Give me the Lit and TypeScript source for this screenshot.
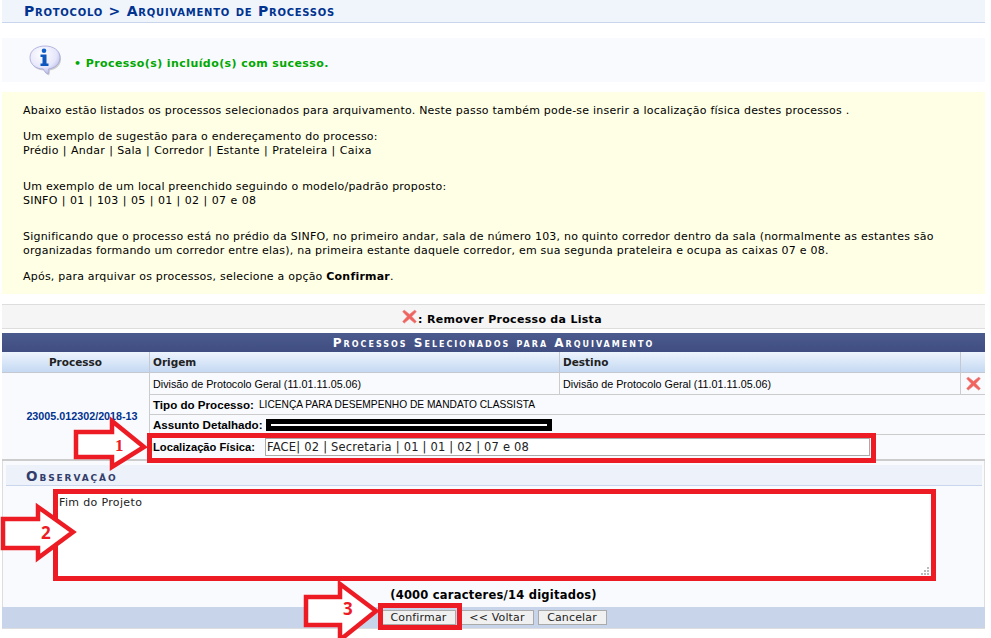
import { LitElement, html, css, svg } from "lit";
import { customElement } from "lit/decorators.js";

const arrow = (d: string) => svg`<path d=${d} fill="#fff" stroke="#ed1c24" stroke-width="4.5" stroke-linejoin="miter" stroke-miterlimit="6"/>`;

const cross = (s: number) => html`<svg class="x" width=${s} height=${s} viewBox="0 0 14 14"><path d="M2 1 L7 5 L12 1 L13.4 2.6 L9.2 7 L13.4 11.6 L12 13.2 L7 9.2 L2 13.2 L.6 11.6 L4.8 7 L.6 2.6 Z" fill="#f0635f" stroke="#e8908c" stroke-width=".6"/></svg>`;

@customElement("app-root")
export class AppRoot extends LitElement {
  static styles = css`
    :host { display: block; position: relative; width: 991px; height: 638px; overflow: hidden; background: #fff; font-family: "DejaVu Sans", Verdana, sans-serif; font-size: 11px; color: #000; }
    .page { display: flex; flex-direction: column; padding: 0 6px 0 2px; }
    .title { height: 22px; border-bottom: 1px solid #c8d5ec; background: #f0f4fb; display: flex; align-items: center; padding-left: 22px; font-variant: small-caps; font-weight: bold; font-size: 14px; color: #003390; letter-spacing: .76px; white-space: nowrap; }
    .msg { margin-top: 15px; height: 44px; background: #f9fafd; display: flex; align-items: flex-start; padding-left: 26px; gap: 12px; }
    .msg svg { margin-top: 5px; }
    .msg p { margin: 19px 0 0; font-weight: bold; color: #00a800; font-size: 11px; line-height: 14px; letter-spacing: .42px; }
    .help { margin-top: 10px; background: #ffffe6; padding: 12px 21px 10px; line-height: 14px; font-size: 11px; letter-spacing: .22px; }
    .help p { margin: 0 0 12px; }
    .help p.lg { margin-bottom: 22px; }
    .help p:last-child { margin: 0; }
    .seq { word-spacing: .55px; }
    .legend { margin-top: 10px; height: 18px; background: #f5f5f5; border-top: 1px solid #ddd; border-bottom: 1px solid #ddd; display: flex; align-items: center; justify-content: center; font-weight: bold; font-size: 11px; letter-spacing: .3px; padding: 5px 0 0 17px; }
    .legend .x { margin-right: 1px; margin-top: -6px; }
    .caption { margin-top: 4px; height: 19px; background: linear-gradient(#4c5b8d, #3f4d80); color: #fff; display: flex; align-items: center; justify-content: center; font-variant: small-caps; font-weight: bold; font-size: 12px; letter-spacing: 2px; white-space: nowrap; }
    .grid { display: grid; grid-template-columns: 148px 410px 401px 24px; background: #f9fafd; border-bottom: 2px solid #ccc; font-family: "Liberation Sans", Arial, sans-serif; font-size: 10.75px; }
    .th { height: 20px; border-bottom: 1px solid #c4c8d0; border-right: 1px solid #c4c8d0; background: linear-gradient(#edf4fd, #c5d9f3); display: flex; align-items: center; padding-left: 3px; font-family: "DejaVu Sans", sans-serif; font-size: 10.5px; font-weight: bold; color: #222; }
    .th.c { justify-content: center; padding-left: 0; }
    .th.last { border-right: none; }
    .proc { grid-row: span 4; border-right: 1px solid #ccc; display: flex; align-items: center; justify-content: center; color: #003390; font-weight: bold; padding: 0 0 0 13px; }
    .td { display: flex; align-items: center; padding-left: 3px; border-bottom: 1px solid #ccc; white-space: nowrap; }
    .r1 { height: 21px; border-right: 1px solid #ccc; }
    .r1.last { border-right: none; justify-content: center; padding: 0; }
    .wide { grid-column: 2 / 5; height: 19px; }
    .wide b { font-size: 11.6px; margin-right: 5px; }
    .upper { font-size: 10.2px; }
    .black { display: inline-block; box-sizing: border-box; border: 5px solid #000; background: #fff; height: 12px; width: 286px; margin-left: -2px; }
    .loc { grid-column: 2 / 5; height: 24px; border-bottom: none; }
    .loc b { font-size: 11.2px; width: 112px; flex: none; }
    .input { width: 605px; height: 18px; box-sizing: border-box; border: 1px solid #aaa; background: #fff; display: flex; align-items: center; padding-left: 1px; font-family: "DejaVu Sans", sans-serif; font-size: 11.5px; letter-spacing: .2px; color: #222; }
    .panel { border-left: 1px solid #ddd; border-right: 1px solid #ddd; background: #f9fafd; display: flex; flex-direction: column; align-items: center; }
    .obs { margin-top: 4px; align-self: stretch; margin-left: 3px; margin-right: 2px; box-sizing: border-box; height: 21px; background: #edf1f9; border-bottom: 1px solid #c8d5ec; display: flex; align-items: center; padding: 1px 0 0 20px; font-variant: small-caps; font-weight: bold; font-size: 13.5px; letter-spacing: 1.9px; color: #333d6b; }
    .ta { align-self: flex-start; margin: 3px 0 0 50px; width: 883px; height: 92px; box-sizing: border-box; border: 5px solid #ed1c24; background: #fff; padding: 2px 1px; font-size: 11px; line-height: 14px; letter-spacing: .35px; position: relative; color: #222; }
    .grip { position: absolute; right: 2px; bottom: 1px; }
    .count { margin-top: 7px; height: 19px; font-weight: bold; font-size: 11.5px; line-height: 14px; letter-spacing: .23px; }
    .foot { height: 21px; background: #c8d4ea; display: flex; align-items: center; justify-content: center; gap: 4px; padding-left: 1px; border-bottom: 1px solid #ddd; }
    button { height: 15px; box-sizing: border-box; padding: 0; border: 1px solid #aaa; background: #f0f0f0; font-family: "DejaVu Sans", sans-serif; font-size: 11px; letter-spacing: .15px; line-height: 13px; color: #222; border-radius: 0; }
    .first { width: 74px; margin-right: 1px; }
    .second { width: 73px; }
    .third { width: 69px; }
    .box { position: absolute; box-sizing: border-box; border: 5px solid #ed1c24; pointer-events: none; }
    .b1 { left: 147px; top: 433px; width: 729px; height: 30px; }
    .b3 { left: 378px; top: 603px; width: 84px; height: 27px; }
    .arrows { position: absolute; left: 0; top: 0; pointer-events: none; }
    .n { position: absolute; color: #ed1c24; font-family: "Open Sans", sans-serif; font-weight: bold; font-size: 17px; line-height: 20px; }
    .n1 { left: 115px; top: 436px; font-family: "Liberation Serif", serif; }
    .n2 { left: 41px; top: 523px; }
    .n3 { left: 343px; top: 599px; }
  `;

  render() {
    return html`
      <div class="page">
        <div class="title">Protocolo &gt; Arquivamento de Processos</div>
        <div class="msg">
          <svg width="34" height="34" viewBox="0 0 34 34">
            <defs>
              <radialGradient id="bub" cx=".4" cy=".3" r=".8"><stop offset="0" stop-color="#fff"/><stop offset=".6" stop-color="#e6e6fb"/><stop offset="1" stop-color="#a7a8dc"/></radialGradient>
            </defs>
            <path d="M20 31 C21 29 21 27.5 20.5 26 C27 25 32 21 32 14.5 C32 7 25 3 17 3 C9 3 2 7 2 14.5 C2 21.5 8 26 15.5 26 C16 28 17.5 30 20 31 Z" fill="#777" opacity=".35" transform="translate(1 1.5)"/>
            <path d="M20 31 C21 29 21 27.5 20.5 26 C27 25 32 21 32 14.5 C32 7 25 3 17 3 C9 3 2 7 2 14.5 C2 21.5 8 26 15.5 26 C16 28 17.5 30 20 31 Z" fill="url(#bub)" stroke="#a3a5d8" stroke-width=".8"/>
            <circle cx="16" cy="7.8" r="2.3" fill="#1160c8"/>
            <path d="M12.5 11.5 H18.5 V20.5 H20.5 V23 H12.5 V20.5 H14.5 V14 H12.5 Z" fill="#0d57bd"/>
          </svg>
          <p>• Processo(s) incluído(s) com sucesso.</p>
        </div>
        <div class="help">
          <p>Abaixo estão listados os processos selecionados para arquivamento. Neste passo também pode-se inserir a localização física destes processos .</p>
          <p class="lg">Um exemplo de sugestão para o endereçamento do processo:<br /><span class="seq">Prédio | Andar | Sala | Corredor | Estante | Prateleira | Caixa</span></p>
          <p class="lg">Um exemplo de um local preenchido seguindo o modelo/padrão proposto:<br /><span class="seq">SINFO | 01 | 103 | 05 | 01 | 02 | 07 e 08</span></p>
          <p>Significando que o processo está no prédio da SINFO, no primeiro andar, sala de número 103, no quinto corredor dentro da sala (normalmente as estantes são organizadas formando um corredor entre elas), na primeira estante daquele corredor, em sua segunda prateleira e ocupa as caixas 07 e 08.</p>
          <p>Após, para arquivar os processos, selecione a opção <b>Confirmar</b>.</p>
        </div>
        <div class="legend">${cross(15)}: Remover Processo da Lista</div>
        <div class="caption">Processos Selecionados para Arquivamento</div>
        <div class="grid">
          <div class="th c">Processo</div>
          <div class="th">Origem</div>
          <div class="th">Destino</div>
          <div class="th last"></div>
          <div class="proc">23005.012302/2018-13</div>
          <div class="td r1">Divisão de Protocolo Geral (11.01.11.05.06)</div>
          <div class="td r1">Divisão de Protocolo Geral (11.01.11.05.06)</div>
          <div class="td r1 last">${cross(15)}</div>
          <div class="td wide"><b>Tipo do Processo:</b> <span class="upper">LICENÇA PARA DESEMPENHO DE MANDATO CLASSISTA</span></div>
          <div class="td wide"><b>Assunto Detalhado:</b><span class="black"></span></div>
          <div class="td loc"><b>Localização Física:</b><div class="input">FACE| 02 | Secretaria | 01 | 01 | 02 | 07 e 08</div></div>
        </div>
        <div class="panel">
          <div class="obs">Observação</div>
          <div class="ta">Fim do Projeto
            <svg class="grip" width="8" height="8" viewBox="0 0 8 8" fill="#bbb"><rect x="6" y="0" width="2" height="2"/><rect x="3" y="3" width="2" height="2"/><rect x="6" y="3" width="2" height="2"/><rect x="0" y="6" width="2" height="2"/><rect x="3" y="6" width="2" height="2"/><rect x="6" y="6" width="2" height="2"/></svg>
          </div>
          <div class="count">(4000 caracteres/14 digitados)</div>
        </div>
        <div class="foot">
          <button class="first">Confirmar</button>
          <button class="second">&lt;&lt; Voltar</button>
          <button class="third">Cancelar</button>
        </div>
      </div>
      <svg class="arrows" width="991" height="638" viewBox="0 0 991 638">
        ${arrow("M76 432 H112 V421 L144 447 L112 467 V457 H76 Z")}
        ${arrow("M3 519 H38 V507 L73 532 L38 558 V548 H3 Z")}
        ${arrow("M306 597 H340 V584 L376 611 L340 640 V625 H306 Z")}
      </svg>
      <div class="box b1"></div>
      <div class="box b3"></div>
      <span class="n n1">1</span>
      <span class="n n2">2</span>
      <span class="n n3">3</span>
    `;
  }
}
